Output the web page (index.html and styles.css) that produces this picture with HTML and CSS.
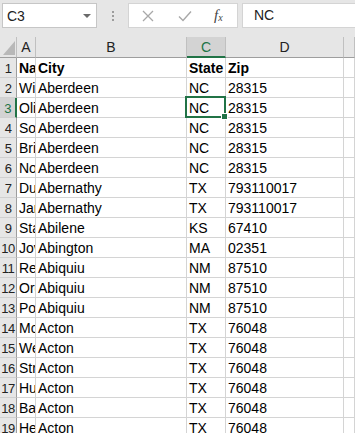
FILE: index.html
```html
<!DOCTYPE html>
<html lang="en">
<head>
    <meta charset="UTF-8">
    <meta name="viewport" content="width=device-width, initial-scale=1.0">
    <title>Sheet1</title>
    <link rel="stylesheet" href="styles.css">
</head>
<body>
<div class="formula-bar">
    <div class="name-box">
        <span>C3</span>
        <span class="caret"></span>
    </div>
    <div class="grip"><i></i><i></i><i></i></div>
    <div class="buttons">
        <svg class="btn-icon" width="12" height="12" viewBox="0 0 12 12">
            <path d="M1 1 L11 11 M11 1 L1 11" stroke="#a8a8a8" stroke-width="1.3" fill="none"/>
        </svg>
        <svg class="btn-icon" width="14" height="12" viewBox="0 0 14 12">
            <path d="M1 6.5 L5 10.5 L13 1.5" stroke="#a8a8a8" stroke-width="1.4" fill="none"/>
        </svg>
        <span class="fx">f<sub>x</sub></span>
    </div>
    <div class="formula-input">NC</div>
</div>

<div class="sheet">
    <div class="row head">
        <div class="cell corner"><span class="tri"></span></div>
        <div class="cell col">A</div>
        <div class="cell col">B</div>
        <div class="cell col active">C</div>
        <div class="cell col">D</div>
        <div class="cell col"></div>
    </div>
    <div class="row">
        <div class="cell num">1</div>
        <div class="cell bold">Name</div>
        <div class="cell bold">City</div>
        <div class="cell bold">State</div>
        <div class="cell bold">Zip</div>
        <div class="cell"></div>
    </div>
    <div class="row">
        <div class="cell num">2</div>
        <div class="cell">William</div>
        <div class="cell">Aberdeen</div>
        <div class="cell">NC</div>
        <div class="cell">28315</div>
        <div class="cell"></div>
    </div>
    <div class="row">
        <div class="cell num active">3</div>
        <div class="cell">Olivia</div>
        <div class="cell">Aberdeen</div>
        <div class="cell selected">NC</div>
        <div class="cell">28315</div>
        <div class="cell"></div>
    </div>
    <div class="row">
        <div class="cell num">4</div>
        <div class="cell">Sophia</div>
        <div class="cell">Aberdeen</div>
        <div class="cell">NC</div>
        <div class="cell">28315</div>
        <div class="cell"></div>
    </div>
    <div class="row">
        <div class="cell num">5</div>
        <div class="cell">Brian</div>
        <div class="cell">Aberdeen</div>
        <div class="cell">NC</div>
        <div class="cell">28315</div>
        <div class="cell"></div>
    </div>
    <div class="row">
        <div class="cell num">6</div>
        <div class="cell">Noah</div>
        <div class="cell">Aberdeen</div>
        <div class="cell">NC</div>
        <div class="cell">28315</div>
        <div class="cell"></div>
    </div>
    <div class="row">
        <div class="cell num">7</div>
        <div class="cell">Duncan</div>
        <div class="cell">Abernathy</div>
        <div class="cell">TX</div>
        <div class="cell">793110017</div>
        <div class="cell"></div>
    </div>
    <div class="row">
        <div class="cell num">8</div>
        <div class="cell">James</div>
        <div class="cell">Abernathy</div>
        <div class="cell">TX</div>
        <div class="cell">793110017</div>
        <div class="cell"></div>
    </div>
    <div class="row">
        <div class="cell num">9</div>
        <div class="cell">Stanley</div>
        <div class="cell">Abilene</div>
        <div class="cell">KS</div>
        <div class="cell">67410</div>
        <div class="cell"></div>
    </div>
    <div class="row">
        <div class="cell num">10</div>
        <div class="cell">Jovan</div>
        <div class="cell">Abington</div>
        <div class="cell">MA</div>
        <div class="cell">02351</div>
        <div class="cell"></div>
    </div>
    <div class="row">
        <div class="cell num">11</div>
        <div class="cell">Reggie</div>
        <div class="cell">Abiquiu</div>
        <div class="cell">NM</div>
        <div class="cell">87510</div>
        <div class="cell"></div>
    </div>
    <div class="row">
        <div class="cell num">12</div>
        <div class="cell">Oren</div>
        <div class="cell">Abiquiu</div>
        <div class="cell">NM</div>
        <div class="cell">87510</div>
        <div class="cell"></div>
    </div>
    <div class="row">
        <div class="cell num">13</div>
        <div class="cell">Powell</div>
        <div class="cell">Abiquiu</div>
        <div class="cell">NM</div>
        <div class="cell">87510</div>
        <div class="cell"></div>
    </div>
    <div class="row">
        <div class="cell num">14</div>
        <div class="cell">McKay</div>
        <div class="cell">Acton</div>
        <div class="cell">TX</div>
        <div class="cell">76048</div>
        <div class="cell"></div>
    </div>
    <div class="row">
        <div class="cell num">15</div>
        <div class="cell">Wesley</div>
        <div class="cell">Acton</div>
        <div class="cell">TX</div>
        <div class="cell">76048</div>
        <div class="cell"></div>
    </div>
    <div class="row">
        <div class="cell num">16</div>
        <div class="cell">Stroud</div>
        <div class="cell">Acton</div>
        <div class="cell">TX</div>
        <div class="cell">76048</div>
        <div class="cell"></div>
    </div>
    <div class="row">
        <div class="cell num">17</div>
        <div class="cell">Hugh</div>
        <div class="cell">Acton</div>
        <div class="cell">TX</div>
        <div class="cell">76048</div>
        <div class="cell"></div>
    </div>
    <div class="row">
        <div class="cell num">18</div>
        <div class="cell">Barry</div>
        <div class="cell">Acton</div>
        <div class="cell">TX</div>
        <div class="cell">76048</div>
        <div class="cell"></div>
    </div>
    <div class="row">
        <div class="cell num">19</div>
        <div class="cell">Henry</div>
        <div class="cell">Acton</div>
        <div class="cell">TX</div>
        <div class="cell">76048</div>
        <div class="cell"></div>
    </div>
</div>
</body>
</html>
```

FILE: styles.css
```css
body {
    margin: 0;
    font-family: "Liberation Sans", Arial, sans-serif;
    font-size: 14px;
    color: #000;
    background: #fff;
    overflow: hidden;
}

/* formula bar */
.formula-bar {
    display: flex;
    align-items: flex-start;
    height: 37px;
    padding-top: 3px;
    box-sizing: border-box;
    background: #e6e6e6;
}

.name-box {
    display: flex;
    align-items: center;
    justify-content: space-between;
    width: 95px;
    height: 25px;
    margin-left: 2px;
    padding: 0 5px 0 4px;
    box-sizing: border-box;
    background: #fff;
    border: 1px solid #c6c6c6;
    color: #222;
}

.caret {
    width: 0;
    height: 0;
    border-left: 4px solid transparent;
    border-right: 4px solid transparent;
    border-top: 4px solid #6a6a6a;
}

.grip {
    display: flex;
    flex-direction: column;
    gap: 2px;
    width: 31px;
    padding-top: 8px;
    align-items: center;
}

.grip i {
    display: block;
    width: 2px;
    height: 2px;
    background: #9c9c9c;
}

.buttons {
    display: flex;
    align-items: center;
    width: 110px;
    height: 25px;
    padding-left: 13px;
    gap: 24px;
    box-sizing: border-box;
    background: #fff;
    border: 1px solid #d4d4d4;
}

.fx {
    margin-left: -2px;
    font-family: "Liberation Serif", serif;
    font-style: italic;
    font-size: 15px;
    color: #444;
}

.fx sub {
    font-size: 10px;
    vertical-align: -1px;
}

.formula-input {
    flex: 1;
    height: 25px;
    margin-left: 4px;
    padding-left: 11px;
    line-height: 23px;
    box-sizing: border-box;
    background: #fff;
    border: 1px solid #d4d4d4;
    border-right: none;
    color: #222;
}

/* grid */
.row {
    display: grid;
    grid-template-columns: 17px 19px 151px 39px 118px 1fr;
}

.cell {
    height: 20px;
    padding: 1px 2px 0;
    line-height: 19px;
    box-sizing: border-box;
    border-right: 1px solid #d4d4d4;
    border-bottom: 1px solid #d4d4d4;
    white-space: nowrap;
    overflow: hidden;
}

.bold {
    font-weight: bold;
}

.head .cell {
    height: 21px;
    padding-top: 1px;
    background: #e6e6e6;
    border-right-color: #c0c0c0;
    border-bottom-color: #9e9e9e;
    text-align: center;
    color: #222;
}

.head .corner {
    position: relative;
}

.tri {
    position: absolute;
    right: 1px;
    bottom: 2px;
    width: 12px;
    height: 14px;
    background: #b8b8b8;
    clip-path: polygon(100% 0, 100% 100%, 0 100%);
}

.num {
    padding: 1px 0 0;
    font-size: 13px;
    letter-spacing: -0.5px;
    text-align: center;
    background: #e6e6e6;
    border-right-color: #9e9e9e;
    border-bottom-color: #d0d0d0;
    color: #222;
}

.head .active,
.num.active {
    background: #d3d3d3;
    color: #217346;
}

.head .active {
    border-bottom: 2px solid #217346;
}

.num.active {
    border-right: 2px solid #217346;
}

.selected {
    position: relative;
    overflow: visible;
}

.selected::after {
    content: "";
    position: absolute;
    left: -2px;
    top: -2px;
    right: -1px;
    bottom: -1px;
    border: 2px solid #217346;
}

.selected::before {
    content: "";
    position: absolute;
    right: -3px;
    bottom: -3px;
    width: 5px;
    height: 5px;
    background: #217346;
    border: 1px solid #fff;
    z-index: 1;
}
```
